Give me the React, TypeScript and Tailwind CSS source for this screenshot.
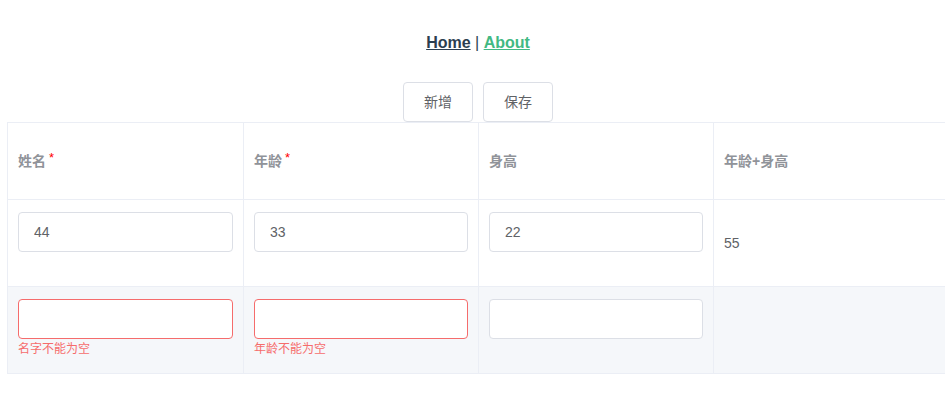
import React, { useState } from 'react';

type Row = { name: string; age: string; height: string };

const font = { fontFamily: '"Liberation Sans", "Noto Sans CJK SC", sans-serif' };

const cols = 'grid grid-cols-[236px_235px_235px_1fr]';

const HeaderCell = ({ label, required }: { label: string; required?: boolean }) => (
  <div className="flex h-[76px] items-center border-r border-[#ebeef5] px-[10px] text-[14px] font-bold text-[#909399] last:border-r-0">
    <span>{label}</span>
    {required && <span className="ml-[3px] -mt-[6px] text-[13px] font-normal text-[#ff0000]">*</span>}
  </div>
);

const FieldCell = ({ value, error }: { value: string; error?: string }) => (
  <div className="border-r border-[#ebeef5] px-[10px] pt-[12px] pb-[12px]">
    <input
      readOnly
      value={value}
      className={`block h-[40px] w-full rounded-[4px] border bg-white px-[15px] text-[14px] text-[#606266] outline-none ${
        error ? 'border-[#f56c6c]' : 'border-[#dcdfe6]'
      }`}
    />
    <div className="h-[22px] pt-[3px] text-left text-[12px] leading-[14px] text-[#f56c6c]">{error}</div>
  </div>
);

export default function App() {
  const [rows] = useState<Row[]>([
    { name: '44', age: '33', height: '22' },
    { name: '', age: '', height: '' },
  ]);

  return (
    <div className="ml-[7px] w-[942px] text-center" style={font}>
      <nav className="pt-[33px] pb-[29px] text-[16px] leading-[20px] font-bold text-[#2c3e50]">
        <a className="text-[#2c3e50] underline">Home</a>
        <span className="font-normal"> | </span>
        <a className="text-[#42b983] underline">About</a>
      </nav>

      <div className="flex justify-center gap-[10px]">
        <button className="h-[40px] w-[70px] rounded-[4px] border border-[#dcdfe6] bg-white text-[14px] text-[#606266]">
          新增
        </button>
        <button className="h-[40px] w-[70px] rounded-[4px] border border-[#dcdfe6] bg-white text-[14px] text-[#606266]">
          保存
        </button>
      </div>

      <div className="border-x border-t border-[#ebeef5] text-left">
        <div className={`${cols} border-b border-[#ebeef5]`}>
          <HeaderCell label="姓名" required />
          <HeaderCell label="年龄" required />
          <HeaderCell label="身高" />
          <HeaderCell label="年龄+身高" />
        </div>
        {rows.map((r, i) => {
          const sum = r.age && r.height ? String(Number(r.age) + Number(r.height)) : '';
          return (
            <div
              key={i}
              className={`${cols} border-b border-[#ebeef5] ${i === 1 ? 'bg-[#f5f7fa]' : 'bg-white'}`}
            >
              <FieldCell value={r.name} error={r.name === '' ? '名字不能为空' : undefined} />
              <FieldCell value={r.age} error={r.age === '' ? '年龄不能为空' : undefined} />
              <FieldCell value={r.height} />
              <div className="flex items-center px-[10px] text-[14px] text-[#606266]">{sum}</div>
            </div>
          );
        })}
      </div>
    </div>
  );
}
